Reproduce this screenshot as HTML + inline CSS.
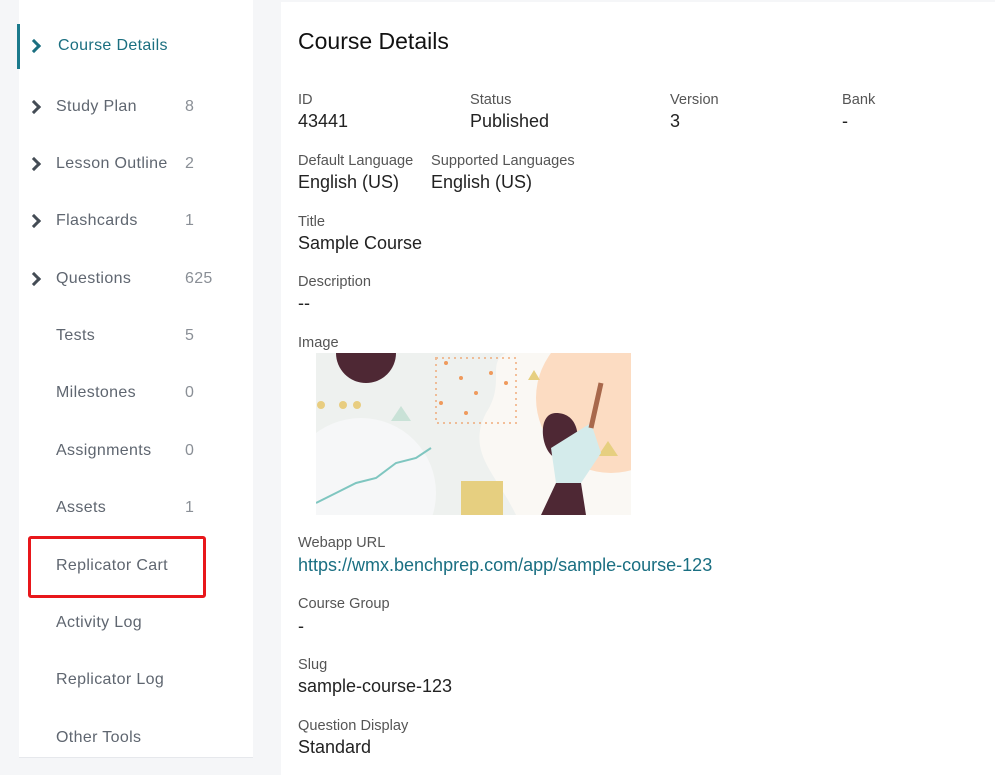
<!DOCTYPE html>
<html><head><style>
body{margin:0;width:995px;height:775px;background:#f5f6f8;font-family:"Liberation Sans",sans-serif;position:relative;overflow:hidden}
.side{position:absolute;left:19px;top:0;width:234px;height:757px;background:#fff;border-bottom:1px solid #e6e8ec}
.it{position:absolute;left:56px;font-size:16px;letter-spacing:0.35px;color:#5f6670;line-height:20px}
.ct{position:absolute;left:185px;font-size:16px;letter-spacing:0.3px;color:#8a8f96;line-height:20px}
.ch{position:absolute;left:29px;width:7px;height:7px;border-right:3px solid #444c55;border-top:3px solid #444c55;transform:rotate(45deg)}
.main{position:absolute;left:281px;top:2px;width:714px;height:773px;background:#fff}
.l{position:absolute;font-size:14.6px;color:#555;line-height:16px}
.v{position:absolute;font-size:18px;color:#222;line-height:20px}
</style></head><body>
<div class="side"></div>
<div style="position:absolute;left:17px;top:24px;width:3px;height:45px;background:#1b7a8c"></div>
<div class="ch" style="top:41px;border-color:#1b6f80"></div><div class="it" style="left:58px;top:36px;color:#1b6f80">Course Details</div>
<div class="ch" style="top:102px"></div><div class="it" style="top:97px">Study Plan</div><div class="ct" style="top:97px">8</div>
<div class="ch" style="top:159px"></div><div class="it" style="top:154px">Lesson Outline</div><div class="ct" style="top:154px">2</div>
<div class="ch" style="top:216px"></div><div class="it" style="top:211px">Flashcards</div><div class="ct" style="top:211px">1</div>
<div class="ch" style="top:274px"></div><div class="it" style="top:269px">Questions</div><div class="ct" style="top:269px">625</div>
<div class="it" style="top:326px">Tests</div><div class="ct" style="top:326px">5</div>
<div class="it" style="top:383px">Milestones</div><div class="ct" style="top:383px">0</div>
<div class="it" style="top:441px">Assignments</div><div class="ct" style="top:441px">0</div>
<div class="it" style="top:498px">Assets</div><div class="ct" style="top:498px">1</div>
<div style="position:absolute;left:28px;top:536px;width:172px;height:56px;border:3px solid #e8171b;border-radius:3px"></div>
<div class="it" style="top:556px">Replicator Cart</div>
<div class="it" style="top:613px">Activity Log</div>
<div class="it" style="top:670px">Replicator Log</div>
<div class="it" style="top:728px">Other Tools</div>

<div class="main"></div>
<div style="position:absolute;left:298px;top:28px;font-size:23px;color:#111">Course Details</div>
<div class="l" style="left:298px;top:92px">ID</div><div class="v" style="left:298px;top:111px">43441</div>
<div class="l" style="left:470px;top:92px">Status</div><div class="v" style="left:470px;top:111px">Published</div>
<div class="l" style="left:670px;top:92px">Version</div><div class="v" style="left:670px;top:111px">3</div>
<div class="l" style="left:842px;top:92px">Bank</div><div class="v" style="left:842px;top:111px">-</div>
<div class="l" style="left:298px;top:153px">Default Language</div><div class="v" style="left:298px;top:172px">English (US)</div>
<div class="l" style="left:431px;top:153px">Supported Languages</div><div class="v" style="left:431px;top:172px">English (US)</div>
<div class="l" style="left:298px;top:214px">Title</div><div class="v" style="left:298px;top:233px">Sample Course</div>
<div class="l" style="left:298px;top:274px">Description</div><div class="v" style="left:298px;top:293px">--</div>
<div class="l" style="left:298px;top:335px">Image</div>
<svg style="position:absolute;left:316px;top:353px" width="315" height="162" viewBox="0 0 315 162">
<rect width="315" height="162" fill="#eef1ef"/>
<path d="M190 0H315V162H200C180 120 150 100 170 60C190 30 170 10 190 0Z" fill="#faf8f4"/>
<circle cx="295" cy="45" r="75" fill="#fcdcc2"/>
<circle cx="45" cy="140" r="75" fill="#f6f7f8"/>
<path d="M0 150L20 140L40 130L60 125L80 110L100 105L115 95" stroke="#7fc6c0" stroke-width="2" fill="none"/>
<path d="M20 0A25 25 0 0 0 80 0Z" fill="#4e2834"/>
<g fill="#ef9a5c"><circle cx="130" cy="10" r="2"/><circle cx="145" cy="25" r="2"/><circle cx="160" cy="40" r="2"/><circle cx="175" cy="20" r="2"/><circle cx="125" cy="50" r="2"/><circle cx="190" cy="30" r="2"/><circle cx="150" cy="60" r="2"/></g>
<rect x="120" y="5" width="80" height="65" fill="none" stroke="#ef9a5c" stroke-width="2" stroke-dasharray="2 4" opacity=".6"/>
<g fill="#e8cd80"><circle cx="5" cy="52" r="4"/><circle cx="27" cy="52" r="4"/><circle cx="41" cy="52" r="4"/></g>
<path d="M75 68L85 53L95 68Z" fill="#c9e2d7"/>
<path d="M282 103L292 88L302 103Z" fill="#e6cf80"/>
<path d="M212 27L218 17L224 27Z" fill="#e6cf80"/>
<rect x="145" y="128" width="42" height="34" fill="#e6cf80"/>
<path d="M240 60C220 60 225 100 240 105L260 100C265 80 260 60 240 60Z" fill="#4e2834"/>
<path d="M235 95L275 70L285 100L265 130L240 130Z" fill="#d4ebeb"/>
<path d="M240 130L265 130L270 162H225Z" fill="#4e2834"/>
<path d="M275 75L285 30" stroke="#a8684b" stroke-width="5"/>
</svg>
<div class="l" style="left:298px;top:535px">Webapp URL</div><div class="v" style="left:298px;top:555px;color:#1a6f82">https://wmx.benchprep.com/app/sample-course-123</div>
<div class="l" style="left:298px;top:596px">Course Group</div><div class="v" style="left:298px;top:616px">-</div>
<div class="l" style="left:298px;top:657px">Slug</div><div class="v" style="left:298px;top:676px">sample-course-123</div>
<div class="l" style="left:298px;top:718px">Question Display</div><div class="v" style="left:298px;top:737px">Standard</div>
</body></html>
